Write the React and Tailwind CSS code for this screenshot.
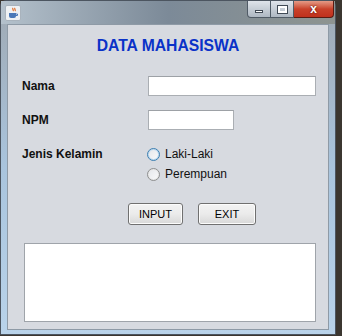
const font = { fontFamily: '"Liberation Sans", Arial, sans-serif' };

const Radio = ({ label, focused }) => (
    <div className="flex items-center gap-[5px] h-[20px]">
        <span
            className={`w-[13px] h-[13px] rounded-full border bg-gradient-to-br from-[#e4e6ea] to-[#fbfbfb] ${
                focused ? 'border-[#3c7fb1] shadow-[inset_0_0_0_1px_#bcd8ee]' : 'border-[#8e8f8f] shadow-[inset_0_0_0_1px_#e6e6e6]'
            }`}
        />
        <span className="text-[12px] text-[#111]">{label}</span>
    </div>
);

const Button = ({ children, w }) => (
    <button
        className={`${w} h-[22px] rounded-[3px] border border-[#707070] bg-gradient-to-b from-[#f3f3f3] via-[#ebebeb] to-[#d8d8d8] text-[11px] text-black shadow-[inset_0_0_0_1px_#fcfcfc]`}
    >
        {children}
    </button>
);

export default function App() {
    return (
        <div className="w-[342px] h-[336px] bg-[#3b3630] overflow-hidden" style={font}>
            <div className="w-[336px] h-[335px] rounded-t-[6px] border border-[#4c5560] bg-gradient-to-b from-[#9fa9b3] via-[#a9c4dd] to-[#b9d3ea] flex flex-col">
                {/* title bar */}
                <div className="h-[23px] flex items-start justify-between bg-gradient-to-r from-[#b4c1cc] via-[#7c8a98] to-[#8e9490]">
                    <div className="ml-[4px] mt-[4px] w-[16px] h-[16px] rounded-[2px] bg-[#eef1f4] border border-[#a9b3bd] flex items-center justify-center">
                        <svg width="12" height="12" viewBox="0 0 12 12">
                            <path d="M6 1c-1 1 1 2 0 3M8 1c-1 1 1 2 0 3" stroke="#e0661d" strokeWidth="1.2" fill="none" />
                            <path d="M2 6h7v3a2 2 0 0 1-2 2H4a2 2 0 0 1-2-2z" fill="#4a78b8" />
                            <path d="M9 7h1.5v1.5H9" stroke="#4a78b8" fill="none" />
                        </svg>
                    </div>
                    <div className="flex mr-[1px]">
                        <div className="w-[24px] h-[17px] rounded-bl-[4px] border border-t-0 border-[#505b66] bg-gradient-to-b from-[#dfe4ea] to-[#aeb8c2] flex items-center justify-center">
                            <span className="w-[8px] h-[3px] bg-white border border-[#404a55] mt-[4px]" />
                        </div>
                        <div className="w-[23px] h-[17px] border border-t-0 border-l-0 border-[#505b66] bg-gradient-to-b from-[#dfe4ea] to-[#aeb8c2] flex items-center justify-center">
                            <span className="w-[9px] h-[7px] border-2 border-white outline outline-1 outline-[#404a55]" />
                        </div>
                        <div className="w-[40px] h-[17px] rounded-br-[4px] border border-t-0 border-l-0 border-[#5a1b12] bg-gradient-to-b from-[#e49a86] via-[#c9412a] to-[#c0301c] flex items-center justify-center">
                            <span className="text-white font-bold text-[12px] leading-none" style={{ textShadow: '0 0 2px #400' }}>x</span>
                        </div>
                    </div>
                </div>

                {/* content */}
                <div className="flex-1 mx-[6px] mb-[4px] border border-[#8e9aa6] bg-[#d7dae0] flex flex-col px-[14px]">
                    <div className="h-[34px] pt-[9px] text-center text-[15.7px] font-bold text-[#0a32c8]">DATA MAHASISWA</div>

                    <div className="mt-[17px] flex items-center h-[20px]">
                        <span className="w-[126px] shrink-0 text-[12px] font-bold text-[#111]">Nama</span>
                        <div className="w-[168px] shrink-0 h-[20px] bg-white border border-[#aaaeb3] border-t-[#9da1a6]" />
                    </div>

                    <div className="mt-[14px] flex items-center h-[20px]">
                        <span className="w-[126px] shrink-0 text-[12px] font-bold text-[#111]">NPM</span>
                        <div className="w-[86px] shrink-0 h-[20px] bg-white border border-[#aaaeb3] border-t-[#9da1a6]" />
                    </div>

                    <div className="mt-[14px] flex items-start">
                        <span className="w-[125px] shrink-0 h-[20px] flex items-center text-[12px] font-bold text-[#111]">Jenis Kelamin</span>
                        <div className="flex flex-col">
                            <Radio label="Laki-Laki" focused />
                            <Radio label="Perempuan" />
                        </div>
                    </div>

                    <div className="mt-[19px] ml-[106px] flex gap-[15px]">
                        <Button w="w-[55px]">INPUT</Button>
                        <Button w="w-[58px]">EXIT</Button>
                    </div>

                    <div className="mt-[18px] ml-[2px] w-[292px] h-[79px] bg-white border border-[#9fa4aa]" />
                </div>
            </div>
        </div>
    );
}
